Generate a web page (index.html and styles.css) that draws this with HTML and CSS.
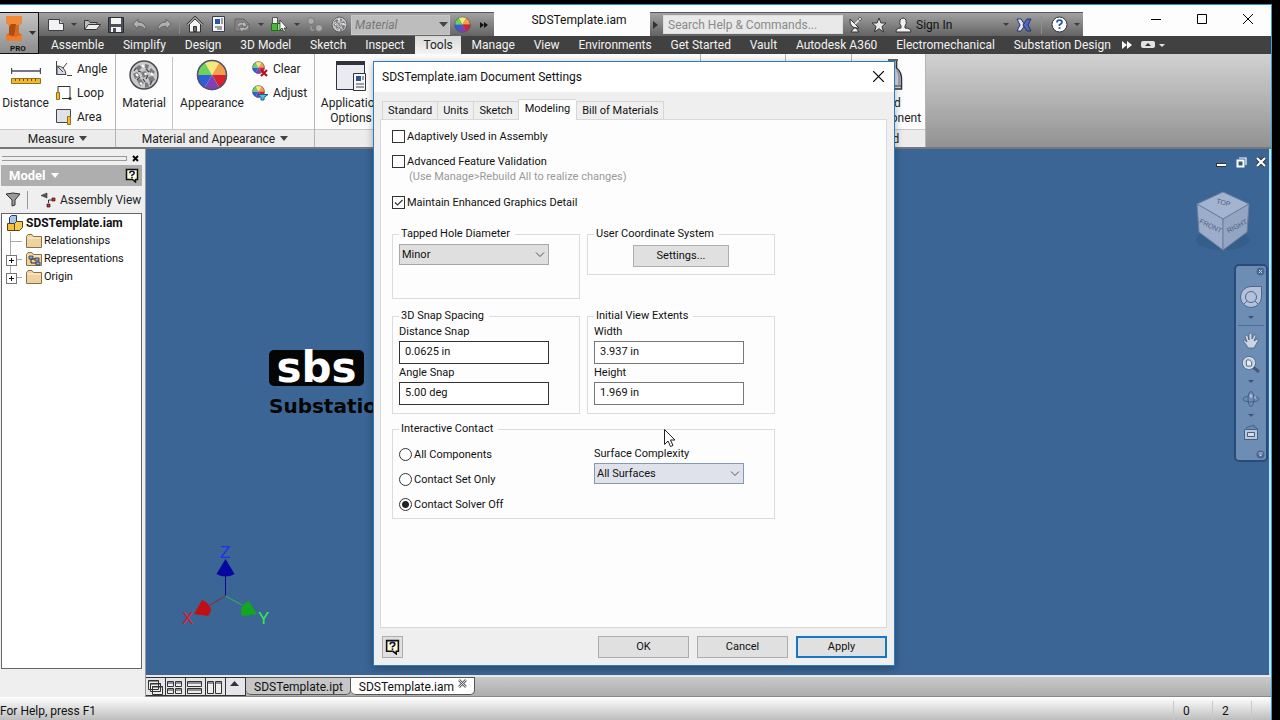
FILE: index.html
```html
<!DOCTYPE html>
<html lang="en">
<head>
  <meta charset="UTF-8">
  <meta name="viewport" content="width=device-width, initial-scale=1.0">
  <title>SDSTemplate.iam</title>
  <link rel="stylesheet" href="styles.css">
</head>
<body>
  <!-- shared icons -->
  <svg class="defs" aria-hidden="true">
    <symbol id="wheel" viewBox="0 0 32 32">
      <path d="M16 16 L8.5 3 A15 15 0 0 1 23.5 3Z" fill="#f3ea7c"/>
      <path d="M16 16 L23.500 3 A15 15 0 0 1 31 16Z" fill="#f0a04e"/>
      <path d="M16 16 L31 16 A15 15 0 0 1 23.500 29Z" fill="#d8232c"/>
      <path d="M16 16 L23.500 29 A15 15 0 0 1 8.500 29Z" fill="#8140b8"/>
      <path d="M16 16 L8.500 29 A15 15 0 0 1 1 16Z" fill="#2e5fd6"/>
      <path d="M16 16 L1 16 A15 15 0 0 1 8.500 3Z" fill="#6fd05c"/>
      <circle cx="16" cy="16" r="14.500" fill="none" stroke="#50526e" stroke-width="1.500"/>
    </symbol>
    <symbol id="sphere" viewBox="0 0 32 32">
      <circle cx="16" cy="16" r="14" fill="#c9c9cb" stroke="#4c4c50" stroke-width="1.500"/>
      <path d="M7 9l4-3 3 2-3 4zM17 5l4 1-1 4-3-1zM23 9l4 4-3 3-3-4zM5 15l4-2 3 4-5 3zM13 13l5-1 1 5-4 2zM20 18l5-1 2 4-5 3zM9 21l4-1 3 4-4 3zM17 23l3 1 1 4-4 1z" fill="#7b7b80"/>
      <path d="M10 12l3 1M18 10l3 3M12 18l-3 3M20 16l-2 4M24 22l-2 4M6 12l2-3M15 20l2 3" stroke="#47474b" stroke-width="1.300"/>
      <path d="M14 6l2 2M8 15l2 2M17 14l1 2M23 14l2 2M12 24l2 1" stroke="#fff" stroke-width="2"/>
    </symbol>
    <symbol id="help" viewBox="0 0 14 15">
      <path d="M1.500 1.500h11v10h-2v2.500l-3-2.500h-6z" fill="#fffed0" stroke="#111" stroke-width="1.500"/>
      <path d="M4.800 5.200q0-2 2.200-2t2.200 1.800q0 1.200-2.200 2.200v.8" fill="none" stroke="#101060" stroke-width="1.600"/>
      <path d="M6.200 8.800h1.600v1.500h-1.600z" fill="#101060"/>
    </symbol>
    <symbol id="folder" viewBox="0 0 18 16">
      <path d="M1.500 3.500v11h15v-11h-8l-1.500-2h-4z" fill="#f0d2a0" stroke="#8a7146"/>
      <path d="M2.500 5h13" stroke="#fff1d6"/>
    </symbol>
  </svg>

  <div class="window">
    <header class="header">
      <button class="app-button" aria-label="Application menu">
        <svg width="38" height="39" viewBox="0 0 38 39">
          <path d="M6 2h16v7l-3 2v8l3 2v6H6v-6l3-2v-8L6 9z" fill="#d9691f"/>
          <path d="M6 2h16v7l-4 2h-8L6 9z" fill="#f18a38"/>
          <path d="M11 10h5l-2 12-5-1v-8z" fill="#b04c12"/>
          <path d="M6 21l8 2 8-2v6H6z" fill="#ee7d2b"/>
          <path d="M29 17h7l-3.500 4z" fill="#333"/>
          <text x="10" y="37" class="pro">PRO</text>
        </svg>
      </button>

      <div class="titlebar">
        <div class="quick-bar">
          <button class="tool" aria-label="New"><svg width="18" height="16"><path d="M1.500 2.500h11l4 4v7h-15z" fill="#f2f2f4" stroke="#3d3d42"/><path d="M12.500 2.500v4h4" fill="#cdd0d8" stroke="#3d3d42"/></svg></button>
          <button class="caret" aria-label="New options"></button>
          <button class="tool" aria-label="Open"><svg width="18" height="16"><path d="M1.500 12.500v-9h4l1.500 2h7v2" fill="#bbb" stroke="#35353a"/><path d="M1.500 12.500l4-5h12l-4 5z" fill="#eee" stroke="#35353a"/></svg></button>
          <button class="tool" aria-label="Save"><svg width="16" height="16"><path d="M.5.5h15v15H.5z" fill="#4b505c" stroke="#2b2d33"/><path d="M3 1h10v6H3z" fill="#f4f4f4"/><path d="M3 10h10v5H3z" fill="#f4f4f4"/><path d="M5 11h3v4H5z" fill="#4b505c"/></svg></button>
          <button class="tool" aria-label="Undo"><svg width="16" height="14"><path d="M1 6l5-5v3q8 0 8 8-3-4-8-4v3z" fill="#b0b0b0" stroke="#676767"/></svg></button>
          <button class="tool" aria-label="Redo"><svg width="16" height="14"><path d="M15 6l-5-5v3q-8 0-8 8 3-4 8-4v3z" fill="#b0b0b0" stroke="#676767"/></svg></button>
          <span class="sep"></span>
          <button class="tool" aria-label="Home"><svg width="18" height="17"><path d="M3.500 8v8h11V8L9 3z" fill="#f4f4f4" stroke="#333"/><path d="M1 9l8-8 8 8" fill="none" stroke="#333" stroke-width="2"/><path d="M1.500 9L9 1.500 16.500 9" fill="none" stroke="#fff"/><path d="M7.500 10.500h3v5h-3z" fill="#6c7078" stroke="#333"/></svg></button>
          <button class="tool" aria-label="Document settings"><svg width="14" height="17"><path d="M.5.500h12v15H.5z" fill="#f4f4f4" stroke="#333b55"/><path d="M3 3h5v5H3z" fill="#2856a4"/><path d="M9 3h2M9 5h2M9 7h2M3 11h7M5 13h5" stroke="#444"/></svg></button>
          <button class="tool" aria-label="Update"><svg width="18" height="16"><path d="M1 2h9l5 5v7H1z" fill="#858585" stroke="#666"/><path d="M3 9q2-5 6-3l1-2 3 5-5 1 1-2q-3-1-4 2zM15 8q0 6-6 5l-1 2-3-4 5-1v1q3 0 3-3z" fill="#b8b8b8" stroke="#666" stroke-width=".7"/></svg></button>
          <button class="caret" aria-label="Update options"></button>
          <button class="tool" aria-label="Select"><svg width="18" height="17"><path d="M2.500 1.500h5v6h-5z" fill="#eee" stroke="#555"/><path d="M1.500 7.500h6v7h-6z" fill="#49b63b" stroke="#246b1c"/><path d="M7.500 7.500h5v7h-5z" fill="#9adf8e" stroke="#246b1c"/><path d="M10 4v10l2-2 2 4 1.500-1-1.500-3h3z" fill="#fff" stroke="#333" stroke-width=".8"/></svg></button>
          <button class="caret" aria-label="Select options"></button>
          <button class="tool" aria-label="Convert"><svg width="18" height="16"><circle cx="5" cy="4" r="3.500" fill="#aaa" stroke="#777"/><circle cx="13" cy="11" r="3.500" fill="#aaa" stroke="#777"/><path d="M5 9v4h3" fill="none" stroke="#aaa"/></svg></button>
          <button class="tool" aria-label="Material browser"><svg width="17" height="17"><use href="#sphere"/></svg></button>
          <select class="material-select" aria-label="Material"><option>Material</option></select>
          <button class="tool" aria-label="Appearance browser"><svg width="17" height="17"><use href="#wheel"/></svg></button>
          <button class="tool" aria-label="More"><svg width="10" height="8"><path d="M1 1l4 3-4 3zM5 1l4 3-4 3z" fill="#111"/></svg></button>
        </div>

        <h1 class="title">SDSTemplate.iam</h1>

        <div class="help-bar">
          <svg width="12" height="12"><path d="M3 2l5 4-5 4z" fill="#333"/></svg>
          <input class="search" type="text" placeholder="Search Help &amp; Commands..." aria-label="Search Help &amp; Commands">
          <button class="tool" aria-label="Communication center"><svg width="15" height="16"><path d="M2 2q-1 10 9 9z" fill="#f2f2f2" stroke="#333"/><path d="M7 7l5-5" stroke="#f2f2f2" stroke-width="1.500"/><path d="M3 15h8l-3-4H6z" fill="#f2f2f2" stroke="#333"/><circle cx="12" cy="2" r="1.500" fill="#fff" stroke="#333" stroke-width=".7"/></svg></button>
          <button class="tool" aria-label="Favorites"><svg width="16" height="16"><path d="M8 1l2 5h5l-4 3.500 1.500 5.500L8 11.700 3.500 15 5 9.500 1 6h5z" fill="#e8e8e8" stroke="#333"/></svg></button>
          <button class="sign-in"><svg width="17" height="16"><path d="M1 15q0-4 5-4V9Q4 7 5 3q3-4 6 0 1 4-1 6v2q6 0 6 4z" fill="#f0f0f0" stroke="#333"/></svg>Sign In</button>
          <span class="grow"></span>
          <button class="caret" aria-label="Account"></button>
          <button class="tool" aria-label="Exchange"><svg width="16" height="14"><path d="M1 1h4l4 6-4 6H1l3-6z" fill="#dfe6f5" stroke="#27336c"/><path d="M15 1h-4L7 7l4 6h4l-3-6z" fill="#5068c0" stroke="#27336c"/></svg></button>
          <span class="sep wide"></span>
          <button class="tool" aria-label="Help"><svg width="17" height="17"><circle cx="8.500" cy="8.500" r="7.500" fill="#fff" stroke="#333"/><path d="M6 6.500Q6 4.200 8.500 4.200T11 6.300q0 1.200-2.500 2.500V10" fill="none" stroke="#2b53a8" stroke-width="1.800"/><path d="M7.600 11.200h1.800V13H7.600z" fill="#2b53a8"/></svg></button>
          <button class="caret" aria-label="Help options"></button>
        </div>

        <span class="grow"></span>
        <div class="window-buttons">
          <button aria-label="Minimize"><svg width="11" height="11"><path d="M0 5.500h10" stroke="#000"/></svg></button>
          <button aria-label="Maximize"><svg width="11" height="11"><path d="M.5.500h9v9h-9z" fill="none" stroke="#000"/></svg></button>
          <button aria-label="Close"><svg width="11" height="11"><path d="M0 0l10 10M10 0L0 10" stroke="#000"/></svg></button>
        </div>
      </div>

      <nav class="ribbon-tabs">
        <div class="tab-list">
          <a href="#">Assemble</a>
          <a href="#">Simplify</a>
          <a href="#">Design</a>
          <a href="#">3D Model</a>
          <a href="#">Sketch</a>
          <a href="#">Inspect</a>
          <a href="#" class="active">Tools</a>
          <a href="#">Manage</a>
          <a href="#">View</a>
          <a href="#">Environments</a>
          <a href="#">Get Started</a>
          <a href="#">Vault</a>
          <a href="#">Autodesk A360</a>
          <a href="#">Electromechanical</a>
          <a href="#">Substation Design</a>
        </div>
        <svg width="10" height="8"><path d="M0 0l5 4-5 4zM5 0l5 4-5 4z" fill="#fff"/></svg>
        <svg width="24" height="8"><rect width="14" height="7" rx="2" fill="#e4e4e4"/><path d="M4 5h6L7 2z" fill="#333"/><path d="M18 3h6l-3 3z" fill="#e4e4e4"/></svg>
      </nav>
    </header>

    <section class="ribbon">
      <div class="panel measure">
        <div class="panel-body">
          <button class="big"><svg width="30" height="36"><path d="M.5 11v6M29.500 11v6M0 14h30" stroke="#4a4a66" stroke-width="1.400"/><path d="M.5 21.500h29v5H.5z" fill="#f2b92c" stroke="#93701a"/><path d="M4.500 22v2M8.500 22v2M12.500 22v2M16.500 22v2M20.500 22v2M24.500 22v2" stroke="#6b4f08"/></svg>Distance</button>
          <div class="stack">
            <button class="small"><svg width="18" height="18"><path d="M1.500 1v13.500h9" fill="none" stroke="#444"/><path d="M2 6q8 0 9 8.500H2z" fill="#d6dbe6" stroke="#444"/><path d="M3 7l5 5M8 8l4-5M12 15.500h5" stroke="#444"/></svg>Angle</button>
            <button class="small"><svg width="18" height="18"><path d="M3 8V2.500h12v12H7" fill="none" stroke="#333"/><path d="M1.500 8.500h3v7h-3z" fill="#f2b92c" stroke="#93701a"/><circle cx="15" cy="14.500" r="1.500" fill="#333"/></svg>Loop</button>
            <button class="small"><svg width="18" height="18"><path d="M1.500 1.500h14v13h-14z" fill="#dfe2ea" stroke="#444"/><path d="M12.500 8.500h3v8h-3z" fill="#f2b92c" stroke="#93701a"/></svg>Area</button>
          </div>
        </div>
        <div class="panel-footer">Measure <i class="arrow"></i></div>
      </div>
      <div class="panel material">
        <div class="panel-body">
          <button class="big"><svg width="32" height="36" viewBox="0 -2 32 36"><use href="#sphere" width="32" height="32"/></svg>Material</button>
          <span class="line"></span>
          <button class="big wide"><svg width="32" height="36" viewBox="0 -2 32 36"><use href="#wheel" width="32" height="32"/></svg>Appearance</button>
          <div class="stack">
            <button class="small"><svg width="18" height="18"><use href="#wheel" x="1" y="1" width="13" height="13"/><path d="M10 10l6 6M16 10l-6 6" stroke="#b3121c" stroke-width="2.200"/></svg>Clear</button>
            <button class="small"><svg width="18" height="18"><use href="#wheel" x="1" y="1" width="13" height="13"/><path d="M7 10.500h10l-4 3v2.500h-3v-2.500z" fill="#4bc2e8" stroke="#17607c"/></svg>Adjust</button>
          </div>
        </div>
        <div class="panel-footer">Material and Appearance <i class="arrow"></i></div>
      </div>
      <div class="panel options">
        <div class="panel-body">
          <button class="big wide"><svg width="32" height="36"><path d="M1.500 4.500h28v28h-28z" fill="#e9ebf1" stroke="#30323c"/><path d="M1 4h29v4H1z" fill="#30323c"/><path d="M18.500 16.500h12v17h-12z" fill="#f4f6fa" stroke="#30323c"/><path d="M21 19h5v5h-5z" fill="#2d5688"/><path d="M27 20h2M27 22h2M21 27h8M21 30h8" stroke="#444"/></svg>Application Options</button>
        </div>
        <div class="panel-footer"></div>
      </div>
      <div class="panel vault"><div class="panel-body"></div><div class="panel-footer"></div></div>
      <div class="panel web"><div class="panel-body"></div><div class="panel-footer"></div></div>
      <div class="panel add">
        <div class="panel-body">
          <button class="big"><svg width="32" height="36"><path d="M14 3h10M16.500 4v7q-7 4-7 11v10h18V22q0-7-5-11V4" fill="#d6d9e2" stroke="#333" stroke-width="1.500"/><path d="M10 29h17" stroke="#333"/><path d="M23 13q3 4 2 15" stroke="#9a9eaa" fill="none" stroke-width="2"/></svg>Add Component</button>
        </div>
        <div class="panel-footer">Add</div>
      </div>
    </section>

    <main class="main">
      <aside class="sidebar">
        <div class="grip"><span></span><button aria-label="Close panel"><svg width="7" height="7"><path d="M1 1l5 5M6 1L1 6" stroke="#000" stroke-width="1.800"/></svg></button></div>
        <div class="model-header">
          <h2>Model <i class="arrow"></i></h2>
          <button aria-label="Help"><svg width="14" height="15"><use href="#help"/></svg></button>
        </div>
        <div class="filter-row">
          <svg width="16" height="15"><path d="M1 2q7-2 14 0L10 8v5l-3 1V8z" fill="#9a9a9a" stroke="#333"/></svg>
          <span class="line"></span>
          <svg width="17" height="16"><path d="M2 3.500l6-2.500v5z" fill="#555" stroke="#333" stroke-width=".6"/><path d="M9.500 11v-3h5M11 13.500h-3" fill="none" stroke="#333"/><path d="M13 6h3v3h-3zM8 12h3v3H8z" fill="#c23434" stroke="#411" stroke-width=".7"/></svg>
          <span>Assembly View</span>
        </div>
        <ul class="tree">
          <li class="root"><svg width="18" height="18"><path d="M1.500 9.500h7v7h-7z" fill="#f4bf35" stroke="#54431b"/><path d="M8.500 9.500l2-2h6v6l-3 3h-5z" fill="#f6cb4f" stroke="#54431b"/><path d="M3.500 3.500l2-2h5v6l-2 2h-5z" fill="#a9c5ea" stroke="#243c66"/></svg>SDSTemplate.iam</li>
          <li><i class="node"></i><svg width="18" height="16"><use href="#folder"/></svg>Relationships</li>
          <li><i class="node plus"></i><svg width="18" height="16"><use href="#folder"/><path d="M6 6v6h5M6 8h5" fill="none" stroke="#222"/><path d="M4 5h4v3H4zM10 7h4v3h-4zM11 11h4v3h-4z" fill="#88a8d8" stroke="#222" stroke-width=".7"/></svg>Representations</li>
          <li><i class="node plus last"></i><svg width="18" height="16"><use href="#folder"/></svg>Origin</li>
        </ul>
      </aside>

      <div class="workspace">
        <div class="canvas">
          <div class="sbs-logo">sbs</div>
          <div class="sbs-name">Substation</div>

          <svg class="triad" width="100" height="90" viewBox="0 0 100 90">
            <path d="M45.500 53V22" stroke="#00107c"/>
            <path d="M45.500 53L30 62" stroke="#8c2438"/>
            <path d="M45.500 53L62 62" stroke="#2cba50"/>
            <path d="M45.500 16l9 15q-9 5-18 0z" fill="#0606a0"/>
            <path d="M14 71l8-14q8 3 9 10-1 4-3 6z" fill="#c01016"/>
            <path d="M77 71l-8-13q-8 3-8 10 0 4 2 5z" fill="#14a622"/>
            <text x="40" y="15" fill="#2330e8">Z</text>
            <text x="2" y="81" fill="#e01830">X</text>
            <text x="78" y="81" fill="#31f04d">Y</text>
          </svg>

          <div class="mdi-buttons">
            <button aria-label="Minimize document"><svg width="12" height="12"><path d="M1 9h10" stroke="#333" stroke-width="4"/><path d="M2 9h9" stroke="#fff" stroke-width="2"/></svg></button>
            <button aria-label="Restore document"><svg width="12" height="12"><path d="M4 2h7v7" fill="none" stroke="#fff" stroke-width="1.200"/><path d="M2.500 4.500h6v6h-6z" fill="#34577c" stroke="#fff" stroke-width="2"/></svg></button>
            <button aria-label="Close document"><svg width="12" height="12"><path d="M2 2l8 8M10 2l-8 8" stroke="#333" stroke-width="4"/><path d="M2 2l8 8M10 2l-8 8" stroke="#fff" stroke-width="2.200"/></svg></button>
          </div>

          <svg class="cube" width="64" height="72" viewBox="0 0 64 72">
            <ellipse cx="32" cy="53" rx="27" ry="10" fill="#234a75" opacity=".25"/>
            <path d="M32 5l26 12-26 15L6 17z" fill="#a3b4d0" stroke="#6f7f9b"/>
            <path d="M6 17l26 15v31L8 45z" fill="#9badca" stroke="#6f7f9b"/>
            <path d="M58 17L32 32v31l24-18z" fill="#92a5c3" stroke="#6f7f9b"/>
            <text x="25" y="18" transform="rotate(14 32 17)">TOP</text>
            <text x="8" y="41" transform="rotate(26 19 38)">FRONT</text>
            <text x="35" y="42" transform="rotate(-28 45 39)">RIGHT</text>
          </svg>

          <div class="nav-bar">
            <button class="mini end" aria-label="Close navigation bar"><svg width="9" height="9"><circle cx="4.500" cy="4.500" r="4" fill="#4a6790"/><path d="M3 3l3 3M6 3L3 6" stroke="#c9d6e8"/></svg></button>
            <button class="nav" aria-label="Steering wheel"><svg width="24" height="24"><path d="M12 1.500h10.500V12A10.500 10.500 0 1 1 12 1.500z" fill="#b3c2d9" stroke="#4c678d"/><circle cx="12" cy="12" r="5.500" fill="none" stroke="#4c678d"/><path d="M8 16l-3 3M16 16l3 3" stroke="#4c678d"/></svg></button>
            <button class="mini" aria-label="Wheel options"><svg width="6" height="4"><path d="M0 0h6L3 3z" fill="#3b567c"/></svg></button>
            <hr>
            <button class="nav" aria-label="Pan"><svg width="18" height="18"><path d="M6 16q-1-3-5-7 1-2 4 1L3 4q1-2 3 0l1 4V2q1-2 3 0v5l2-4q2-1 2 1l-2 5 3-2q2 0 1 2l-4 7z" fill="#cbd5e3" stroke="#48617f" stroke-width=".8"/></svg></button>
            <button class="nav" aria-label="Zoom"><svg width="18" height="18"><path d="M11 11l6 5" stroke="#465b78" stroke-width="3"/><circle cx="7" cy="7" r="5.500" fill="#b9c7da" stroke="#e0e6ee" stroke-width="1.500"/><circle cx="7" cy="7" r="6.500" fill="none" stroke="#48617f" stroke-width=".7"/><path d="M4.500 4h3l2 2v4h-5z" fill="#e8edf4" stroke="#48617f" stroke-width=".8"/></svg></button>
            <button class="mini" aria-label="Zoom options"><svg width="6" height="4"><path d="M0 0h6L3 3z" fill="#3b567c"/></svg></button>
            <button class="nav" aria-label="Orbit"><svg width="18" height="18"><ellipse cx="9" cy="9" rx="8" ry="3" fill="none" stroke="#435f88"/><ellipse cx="9" cy="9" rx="3" ry="7.500" fill="none" stroke="#435f88"/><path d="M9 4v4M7 6h4M13 6v3" stroke="#c4d0e2"/></svg></button>
            <button class="mini" aria-label="Orbit options"><svg width="6" height="4"><path d="M0 0h6L3 3z" fill="#3b567c"/></svg></button>
            <button class="nav" aria-label="Look at"><svg width="18" height="18"><path d="M4 4l8-3v3M13 3l3 2" fill="none" stroke="#435f88"/><path d="M2.500 5.500h13v10h-13z" fill="#bac7d9" stroke="#435f88"/><path d="M5.500 8.500h7v4h-7z" fill="#d5dde8" stroke="#435f88"/></svg></button>
            <button class="mini end" aria-label="Navigation bar options"><svg width="9" height="9"><circle cx="4.500" cy="4.500" r="4" fill="#4a6790"/><path d="M2.500 3h4" stroke="#c9d6e8"/><path d="M2.500 4.500h4l-2 2z" fill="#c9d6e8"/></svg></button>
          </div>
        </div>

        <div class="doc-bar">
          <button class="view-mode" aria-label="Cascade"><svg width="18" height="18"><path d="M2.500 2.500h10v9h-10zM4.500 5.500h10v8h-10zM6.500 8.500h10v8h-10z" fill="#eee" stroke="#333"/><path d="M2 3h11M4 6h11M6 9h11" stroke="#333"/></svg></button>
          <button class="view-mode" aria-label="Tile"><svg width="18" height="18"><path d="M1.500 3.500h6v5h-6zM9.500 3.500h6v5h-6zM1.500 10.500h6v5h-6zM9.500 10.500h6v5h-6z" fill="#eee" stroke="#333"/><path d="M1 5h7M9 5h7M1 12h7M9 12h7" stroke="#333"/></svg></button>
          <button class="view-mode" aria-label="Tile horizontally"><svg width="18" height="18"><path d="M1.500 3.500h14v5h-14zM1.500 10.500h14v5h-14z" fill="#eee" stroke="#333"/><path d="M1 5h15M1 12h15" stroke="#333"/></svg></button>
          <button class="view-mode" aria-label="Tile vertically"><svg width="18" height="18"><path d="M1.500 3.500h6v12h-6zM9.500 3.500h6v12h-6z" fill="#eee" stroke="#333"/><path d="M1 5h7M9 5h7" stroke="#333"/></svg></button>
          <button class="view-mode" aria-label="Document list"><svg width="18" height="18"><path d="M4 8h9L8.500 3z" fill="#333"/></svg></button>
          <a href="#" class="doc-tab">SDSTemplate.ipt</a>
          <a href="#" class="doc-tab active">SDSTemplate.iam <svg width="9" height="9"><path d="M1 1l7 7M8 1L1 8" stroke="#666" stroke-width="2.500"/><path d="M1 1l7 7M8 1L1 8" stroke="#ddd"/></svg></a>
        </div>
      </div>
    </main>

    <footer class="status">
      <span class="status-text">For Help, press F1</span>
      <span class="count">0</span>
      <span class="count">2</span>
      <span class="status-end"></span>
    </footer>
  </div>

  <div class="dialog" role="dialog" aria-labelledby="dialogTitle">
    <div class="dialog-title">
      <h2 id="dialogTitle">SDSTemplate.iam Document Settings</h2>
      <button aria-label="Close dialog"><svg width="11" height="11"><path d="M0 0l11 11M11 0L0 11" stroke="#000" stroke-width="1.200"/></svg></button>
    </div>

    <form class="dialog-body">
      <div class="dialog-tabs">
        <button type="button">Standard</button>
        <button type="button">Units</button>
        <button type="button">Sketch</button>
        <button type="button" class="active">Modeling</button>
        <button type="button">Bill of Materials</button>
      </div>

      <div class="sheet">
        <label class="check"><input type="checkbox"> Adaptively Used in Assembly</label>
        <label class="check"><input type="checkbox"> Advanced Feature Validation</label>
        <p class="note">(Use Manage&gt;Rebuild All to realize changes)</p>
        <label class="check"><input type="checkbox" checked> Maintain Enhanced Graphics Detail</label>

        <div class="groups">
          <fieldset class="tapped">
            <legend>Tapped Hole Diameter</legend>
            <select class="field" aria-label="Tapped Hole Diameter"><option>Minor</option></select>
          </fieldset>
          <fieldset class="ucs">
            <legend>User Coordinate System</legend>
            <button type="button" class="btn settings">Settings...</button>
          </fieldset>
          <fieldset class="values dark">
            <legend>3D Snap Spacing</legend>
            <label for="distanceSnap">Distance Snap</label>
            <input class="field" type="text" id="distanceSnap" value="0.0625 in">
            <label for="angleSnap">Angle Snap</label>
            <input class="field" type="text" id="angleSnap" value="5.00 deg">
          </fieldset>
          <fieldset class="values">
            <legend>Initial View Extents</legend>
            <label for="extentWidth">Width</label>
            <input class="field" type="text" id="extentWidth" value="3.937 in">
            <label for="extentHeight">Height</label>
            <input class="field" type="text" id="extentHeight" value="1.969 in">
          </fieldset>
          <fieldset class="contact">
            <legend>Interactive Contact</legend>
            <div class="radios">
              <label class="check"><input type="radio" name="contact"> All Components</label>
              <label class="check"><input type="radio" name="contact"> Contact Set Only</label>
              <label class="check"><input type="radio" name="contact" checked> Contact Solver Off</label>
            </div>
            <div class="surface">
              <label for="surface">Surface Complexity</label>
              <select class="field hover" id="surface"><option>All Surfaces</option></select>
            </div>
          </fieldset>
        </div>
      </div>

      <div class="dialog-buttons">
        <button type="button" class="btn help" aria-label="Help"><svg width="15" height="16"><use href="#help"/></svg></button>
        <button type="button" class="btn">OK</button>
        <button type="button" class="btn">Cancel</button>
        <button type="button" class="btn default">Apply</button>
      </div>
    </form>
  </div>

  <svg class="cursor" width="13" height="20"><path d="M1.500 1.500v15l3.500-3.500 2.500 5.500 2.500-1-2.500-5.500h4.500z" fill="#fff" stroke="#222"/></svg>
</body>
</html>
```
FILE: styles.css
```css
:root {
  --ui: Roboto, "Open Sans", sans-serif;
  --blue: #3a6595;
  --face: #efefef;
}

* {
  box-sizing: border-box;
}

body {
  margin: 0;
  height: 100vh;
  padding: 4px 8px 0 0;
  background: #000;
  font: 12px/16px var(--ui);
  color: #222;
  overflow: hidden;
  position: relative;
}

button {
  background: none;
  border: 0;
  padding: 0;
  margin: 0;
  font: inherit;
  color: inherit;
}

a {
  color: inherit;
  text-decoration: none;
}

h1, h2, p {
  margin: 0;
  font: inherit;
}

svg {
  display: block;
  flex: none;
}

.defs {
  position: absolute;
  width: 0;
  height: 0;
}

.window {
  height: 100%;
  display: flex;
  flex-direction: column;
  background: #fdfdfd;
  border-top: 1px solid #2a97cc;
  border-right: 1px solid #3f9ccc;
}

.grow {
  flex: 1;
}

.arrow {
  border: 4px solid transparent;
  border-top: 5px solid #444;
  border-bottom: 0;
  margin-left: 5px;
}

/* Title bar */
.header {
  display: grid;
  grid-template-columns: 39px 1fr;
  grid-template-rows: 31px 18px;
}

.app-button {
  grid-row: span 2;
  margin-top: 7px;
  border: 1px solid #111;
  border-left: 0;
  background: linear-gradient(#c4c4c4, #8c8c8c);
}

.pro {
  font: bold 8px var(--ui);
  fill: #111;
}

.titlebar {
  display: flex;
  align-items: stretch;
}

.quick-bar, .help-bar {
  display: flex;
  align-items: center;
  margin-top: 7px;
  border-top: 1px solid #55595f;
  background: linear-gradient(#a2a2a2, #636363);
}

.quick-bar {
  padding-left: 5px;
}

.tool {
  width: 24px;
  display: flex;
  justify-content: center;
}

.tool:last-child {
  width: 20px;
}

.caret {
  width: 12px;
  height: 16px;
  display: flex;
  align-items: center;
  justify-content: center;
}

.caret::before {
  content: "";
  border: 3px solid transparent;
  border-top-color: #3c3c3c;
  border-bottom: 0;
}

.sep {
  width: 1px;
  height: 18px;
  margin: 0 3px;
  background: #8e8e8e;
}

.sep.wide {
  margin: 0 5px;
}

.material-select {
  width: 99px;
  height: 20px;
  padding: 0 3px;
  border: 1px solid #c8c8c8;
  border-radius: 0;
  appearance: none;
  background: #bdbdbd url("data:image/svg+xml,%3Csvg xmlns='http://www.w3.org/2000/svg' width='9' height='5'%3E%3Cpath d='M0 0h9L4.500 5z' fill='%23444'/%3E%3C/svg%3E") no-repeat right 1px center;
  font: italic 12px/16px var(--ui);
  color: #777;
}

.title {
  width: 156px;
  padding: 7px 0 0 14px;
  text-align: center;
  color: #111;
}

.help-bar {
  width: 433px;
}

.search {
  width: 180px;
  height: 19px;
  margin: 0 0 0 1px;
  padding: 0 4px;
  border: 1px solid #ddd;
  background: #e9e9e9;
  font: inherit;
}

.search::placeholder {
  color: #8a8a8a;
}

.sign-in {
  display: flex;
  align-items: center;
  gap: 4px;
  margin-left: 4px;
  color: #111;
}

.window-buttons {
  display: flex;
}

.window-buttons button {
  width: 46px;
  padding-bottom: 2px;
  display: flex;
  align-items: center;
  justify-content: center;
}

.ribbon-tabs {
  display: flex;
  align-items: center;
  padding-left: 4px;
  background: #414141;
  color: #f2f2f2;
  white-space: nowrap;
}

.ribbon-tabs svg {
  margin-left: 3px;
}

.ribbon-tabs svg + svg {
  margin-left: 9px;
}

.tab-list {
  display: flex;
  justify-content: space-between;
  width: 1076px;
}

.tab-list a {
  height: 18px;
  padding: 0 8px;
  line-height: 18px;
}

.tab-list .active {
  background: linear-gradient(#d8d8d8, #f4f4f4);
  color: #222;
}

/* Ribbon */
.ribbon {
  display: flex;
  height: 95px;
  border-bottom: 2px solid #777;
  background: linear-gradient(#d2d2d2, #929292);
}

.panel {
  display: flex;
  flex-direction: column;
  background: #fdfdfd;
  border-right: 1px solid #b4b4b4;
}

.panel-body {
  flex: 1;
  display: flex;
  padding-top: 3px;
}

.panel-footer {
  height: 18px;
  display: flex;
  align-items: center;
  justify-content: center;
  border-top: 1px solid #c8c8c8;
  background: #ececec;
}

.measure { width: 116px; }
.material { width: 199px; }
.options { width: 386px; }
.vault { width: 85px; }
.web { width: 66px; }
.add { width: 74px; }

.big {
  flex: none;
  width: 51px;
  display: flex;
  flex-direction: column;
  align-items: center;
  justify-content: flex-start;
  gap: 3px;
  line-height: 15px;
}

.big.wide {
  width: 72px;
}

.material .big:first-child {
  width: 56px;
}

.material .wide {
  width: 78px;
}

.add .big {
  width: 76px;
}

.stack {
  padding-left: 4px;
}

.small {
  height: 24px;
  display: flex;
  align-items: center;
  gap: 4px;
}

.material .stack {
  padding-left: 0;
}

.line {
  width: 1px;
  background: #c4c4c4;
}

/* Model browser */
.main {
  flex: 1;
  display: flex;
  min-height: 0;
}

.sidebar {
  width: 145px;
  display: flex;
  flex-direction: column;
  padding: 3px 3px 28px 1px;
  background: var(--face);
  white-space: nowrap;
}

.grip {
  display: flex;
  align-items: center;
  gap: 5px;
  height: 12px;
  padding: 0 3px 0 1px;
}

.grip span {
  flex: 1;
  height: 5px;
  border: 1px solid #999;
  border-left: 0;
}

.model-header {
  display: flex;
  align-items: center;
  justify-content: space-between;
  height: 21px;
  margin-top: 1px;
  padding: 0 3px 0 8px;
  background: #aeaeae;
}

.model-header h2 {
  display: flex;
  align-items: center;
  color: #fff;
  font-size: 13px;
  font-weight: bold;
}

.model-header .arrow {
  border-top-color: #fff;
}

.filter-row {
  display: flex;
  align-items: center;
  gap: 4px;
  height: 27px;
  padding-left: 4px;
}

.filter-row .line {
  height: 18px;
  margin: 0 7px 0 2px;
  background: #999;
}

.tree {
  flex: 1;
  margin: 0;
  padding: 0 0 0 4px;
  border: 1px solid #666;
  background: #fff;
  list-style: none;
  font: 11px/18px var(--ui);
  color: #111;
}

.tree li {
  display: flex;
  align-items: center;
  height: 18px;
  gap: 1px;
}

.tree .root {
  gap: 2px;
  font: bold 12px/18px var(--ui);
}

.node {
  width: 18px;
  height: 18px;
  background: linear-gradient(#aaa, #aaa) 4px 0 / 1px 18px no-repeat, linear-gradient(#aaa, #aaa) 4px 9px / 12px 1px no-repeat;
}

.node.last {
  background-size: 1px 9px, 12px 1px;
}

.plus::before {
  content: "";
  display: block;
  width: 9px;
  height: 9px;
  margin-top: 5px;
  border: 1px solid #777;
  background: linear-gradient(#111, #111) center / 5px 1px no-repeat, linear-gradient(#111, #111) center / 1px 5px no-repeat, #fff;
}

/* Graphics area */
.workspace {
  flex: 1;
  display: flex;
  flex-direction: column;
  border-left: 1px solid #999;
}

.canvas {
  flex: 1;
  position: relative;
  background: var(--blue);
  border-right: 2px solid #b6e6f6;
}

.sbs-logo {
  position: absolute;
  left: 123px;
  top: 201px;
  width: 95px;
  height: 36px;
  border-radius: 5px;
  background: #050505;
  color: #fff;
  font: bold 42px/36px "DejaVu Sans", sans-serif;
  text-align: center;
}

.sbs-name {
  position: absolute;
  left: 123px;
  top: 245px;
  font: bold 20px/24px "DejaVu Sans", sans-serif;
  color: #050505;
}

.triad {
  position: absolute;
  left: 34px;
  top: 394px;
  font: 17px "Liberation Sans", sans-serif;
}

.mdi-buttons {
  position: absolute;
  right: 2px;
  top: 7px;
  display: flex;
  gap: 8px;
}

.cube {
  position: absolute;
  right: 14px;
  top: 38px;
  font: 7px "Liberation Sans", sans-serif;
  fill: #4b5f7e;
}

.nav-bar {
  position: absolute;
  right: 1px;
  top: 115px;
  width: 34px;
  height: 198px;
  display: flex;
  flex-direction: column;
  align-items: center;
  padding: 1px;
  border: 2px solid #284b7a;
  border-radius: 5px;
  background: #6e8db5;
}

.nav-bar hr {
  width: 26px;
  margin: 2px 0 3px;
  border: 0;
  border-top: 1px solid #4c6a93;
}

.nav {
  min-height: 24px;
  display: flex;
  align-items: center;
}

.nav:nth-child(2) {
  margin: 9px 0 4px;
}

.mini {
  height: 10px;
  display: flex;
  align-items: center;
}

.mini.end {
  height: 9px;
  align-self: flex-end;
}

.nav-bar > .mini:last-child {
  margin-top: auto;
}

.doc-bar {
  display: flex;
  height: 22px;
  border-top: 2px solid #e8e8e8;
  border-bottom: 1px solid #888;
  background: linear-gradient(#c9c9c9, #adadad);
  color: #111;
}

.view-mode {
  width: 20px;
  border: 1px solid #333;
  border-left-width: 0;
  background: #e6e6ea;
}

.doc-tab {
  display: flex;
  gap: 4px;
  height: 18px;
  padding: 1px 7px 0 8px;
  border: 1px solid #555;
  border-left: 0;
  border-radius: 0 0 5px 5px;
  background: #c6c6c6;
}

.doc-tab.active {
  background: #fff;
}

.status {
  display: flex;
  align-items: center;
  height: 23px;
  padding-top: 4px;
  background: linear-gradient(#fff, #bdbdbd);
  color: #111;
}

.status-text {
  flex: 1;
}

.count {
  width: 39px;
  height: 20px;
  padding: 2px 9px;
  border-left: 1px solid #c8c8c8;
}

.status-end {
  width: 20px;
  height: 20px;
  border-left: 1px solid #c8c8c8;
}

/* Document settings dialog */
.dialog {
  position: absolute;
  left: 373px;
  top: 61px;
  width: 522px;
  display: flex;
  flex-direction: column;
  border: 1px solid #2b7cbf;
  background: var(--face);
  box-shadow: 0 2px 8px rgba(0, 0, 0, 0.3);
  color: #111;
}

.dialog-title {
  display: flex;
  align-items: center;
  justify-content: space-between;
  height: 30px;
  padding: 0 10px 0 8px;
  background: #fff;
}

.dialog-title button {
  padding-bottom: 2px;
}

.dialog-body {
  padding: 7px 7px 7px 6px;
  font: 11px/14px var(--ui);
}

.dialog-tabs {
  display: flex;
  align-items: flex-end;
  padding-left: 2px;
}

.dialog-tabs button {
  height: 18px;
  padding: 1px 5px 0;
  border: 1px solid #d6d6d6;
  border-bottom: 0;
  border-right: 0;
}

.dialog-tabs button:last-child {
  border-right: 1px solid #d6d6d6;
}

.dialog-tabs .active {
  height: 21px;
  margin-bottom: -1px;
  padding: 0 6px 2px;
  background: #fdfdfd;
}

.sheet {
  height: 509px;
  padding: 10px 11px;
  border: 1px solid #d6dade;
  background: #fdfdfd;
}

.check {
  display: flex;
  align-items: flex-start;
  gap: 2px;
  height: 14px;
  margin-bottom: 11px;
}

.check input {
  appearance: none;
  width: 13px;
  height: 13px;
  margin: 0;
  border: 1px solid #333;
  background: #fff;
}

.check input[type="checkbox"]:checked {
  background: url("data:image/svg+xml,%3Csvg xmlns='http://www.w3.org/2000/svg' width='11' height='11'%3E%3Cpath d='M2 5.500l2.500 2.500L9.500 3' fill='none' stroke='%23333' stroke-width='1.200'/%3E%3C/svg%3E") center no-repeat;
}

.check input[type="radio"] {
  border-radius: 50%;
}

.check input[type="radio"]:checked {
  background: radial-gradient(circle, #222 0 3px, #fff 4px);
}

.note {
  margin: -10px 0 12px 17px;
  color: #999;
}

.groups {
  display: grid;
  grid-template-columns: 188px 188px;
  column-gap: 7px;
  align-items: start;
  margin-top: 17px;
}

fieldset {
  min-width: 0;
  margin: 0 0 10px;
  padding: 0 6px;
  border: 1px solid #dcdcdc;
}

legend {
  padding: 0 5px 0 2px;
}

.tapped {
  height: 72px;
}

.ucs {
  height: 48px;
}

.values {
  height: 105px;
  margin-bottom: 8px;
}

.contact {
  grid-column: span 2;
  display: flex;
  height: 97px;
}

.values label, .surface label {
  display: block;
  height: 18px;
  line-height: 18px;
}

.field {
  display: block;
  width: 150px;
  height: 23px;
  padding: 0 5px 2px;
  border: 1px solid #777;
  border-radius: 0;
  background: #fff;
  font: inherit;
  color: #111;
}

.dark .field {
  border-color: #333;
}

select.field {
  appearance: none;
  height: 21px;
  margin-top: 3px;
  padding: 0 2px;
  border-color: #a8a8a8;
  background: #dfdfdf url("data:image/svg+xml,%3Csvg xmlns='http://www.w3.org/2000/svg' width='10' height='6'%3E%3Cpath d='M1 .5l4 4 4-4' fill='none' stroke='%23555'/%3E%3C/svg%3E") no-repeat right 3px center;
}

select.hover {
  margin-top: 0;
  border-color: #8499b4;
  background-color: #dfe2ea;
}

.radios {
  width: 195px;
  padding-top: 12px;
}

.surface {
  padding-top: 9px;
}

.btn {
  width: 91px;
  height: 22px;
  border: 1px solid #adadad;
  background: #e0e0e0;
}

.settings {
  display: block;
  width: 96px;
  margin: 4px 0 0 39px;
}

.dialog-buttons {
  display: flex;
  gap: 8px;
  padding: 8px 0 0 2px;
}

.btn.help {
  width: 21px;
  display: flex;
  align-items: center;
  justify-content: center;
  margin-right: auto;
}

.btn.default {
  border: 2px solid #1677c8;
}

.cursor {
  position: absolute;
  left: 663px;
  top: 428px;
}
```
